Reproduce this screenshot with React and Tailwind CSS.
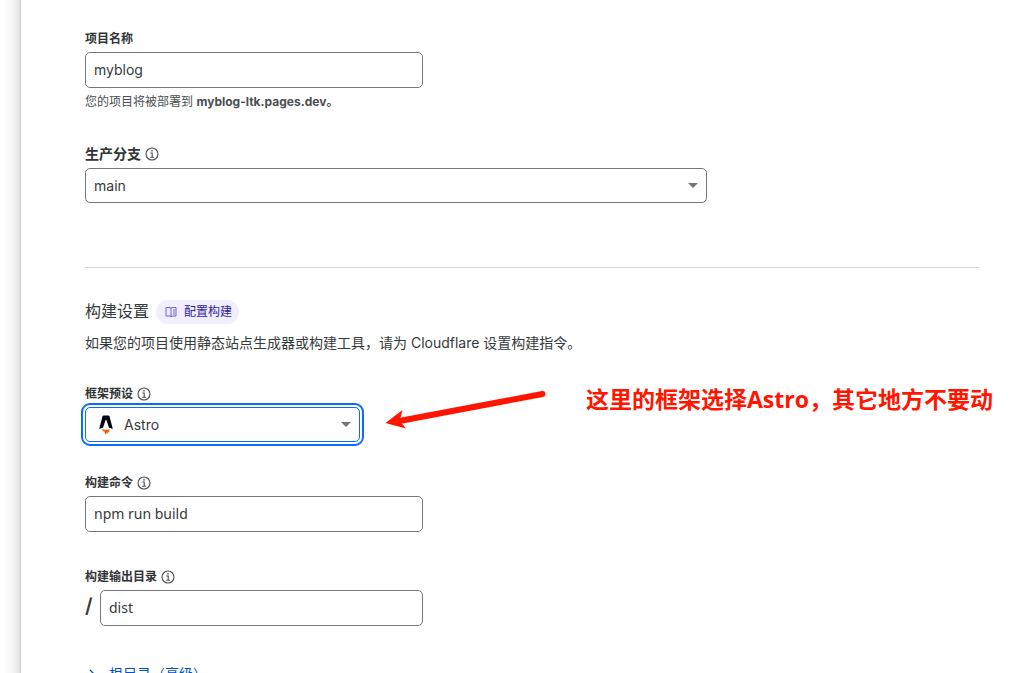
import { useState } from "react";

const fieldStyles =
  "w-full rounded-[5px] border border-[#76777b] bg-white px-2 text-sm text-[#36393a] outline-none";

function InfoIcon() {
  return (
    <svg viewBox="0 0 14 14" className="size-3.5 shrink-0" fill="none" stroke="#4a4d50" aria-hidden="true">
      <circle cx="7" cy="7" r="6" strokeWidth="1.1" />
      <path d="M5.4 6h1.8v4.2M5.2 10.2h3.8" strokeWidth="1.1" />
      <circle cx="7" cy="3.9" r="0.8" fill="#4a4d50" stroke="none" />
    </svg>
  );
}

function Caret() {
  return (
    <svg
      viewBox="0 0 10 5"
      className="pointer-events-none absolute right-[9px] top-[15px] h-[5px] w-2.5"
      aria-hidden="true"
    >
      <path d="M0 0h10L5 5z" fill="#72767a" />
    </svg>
  );
}

function AstroLogo() {
  return (
    <svg
      viewBox="0 0 14 20"
      className="pointer-events-none absolute left-3.5 top-2 h-5 w-3.5"
      aria-hidden="true"
    >
      <path
        fill="#000014"
        d="M3.500 1.200Q3.800.5 4.600.5h4.800q.8 0 1.100.7L13.800 14q-1.900-.9-3.800-1.200L7.500 5.200Q7 4.200 6.500 5.200L4 12.800Q2.100 13.100.2 14z"
      />
      <path
        fill="#ff5d01"
        d="M3.600 13.600c.6 1.200 2.100 1.300 3.600 1.200 1.200 0 2.300-.2 3.100-.9.6 2-.2 2.900-1.300 3.700-.6.4-.8.9-.6 1.500-.8-.4-1-1-.8-1.700-.5.500-.6 1.100-.5 2.100-1.100-.7-1.700-1.500-1.500-2.700-1.900-.6-2.600-1.700-2-3.200z"
      />
    </svg>
  );
}

function Label({ htmlFor, info, big, children }) {
  return (
    <div className={`flex items-center gap-1 ${big ? "mb-1.5 h-4" : "mb-1 h-[18px]"}`}>
      <label
        htmlFor={htmlFor}
        className={`font-bold text-[#313336] ${big ? "text-sm leading-4" : "text-xs leading-4"}`}
      >
        {children}
      </label>
      {info && <InfoIcon />}
    </div>
  );
}

// Flecha y texto en rojo sobre el formulario
function Nota() {
  return (
    <div className="pointer-events-none absolute left-[300px] top-0 flex items-start text-[#ff1500]">
      <svg width="162" height="48" viewBox="0 0 162 48" className="shrink-0" aria-hidden="true">
        <path d="M17 35.500 157.500 9" stroke="#ff1500" strokeWidth="6" strokeLinecap="round" />
        <path d="M.5 38 17.500 25 15.500 33 16.500 38 21 43.500z" fill="#ff1500" />
      </svg>
      <p className="ml-[39px] whitespace-nowrap text-[23px] leading-7 font-bold font-['Open_Sans','Noto_Sans_CJK_SC',sans-serif]">
        这里的框架选择Astro，其它地方不要动
      </p>
    </div>
  );
}

function App() {
  const [nombre, setNombre] = useState("myblog");
  const [rama, setRama] = useState("main");
  const [framework, setFramework] = useState("Astro");
  const [comando, setComando] = useState("npm run build");
  const [salida, setSalida] = useState("dist");

  return (
    <div className="flex min-h-screen bg-white text-[#36393a] font-[Inter,'Noto_Sans_CJK_SC',sans-serif]">
      <div className="w-[21px] shrink-0 border-r border-[#cdcdcd] bg-linear-to-r from-white from-20% via-[#f5f5f5] via-60% to-[#e4e4e4]" />

      <main className="min-w-0 flex-1 pl-16 pr-[54px] pt-[30px]">
        <form onSubmit={(e) => e.preventDefault()}>
          <div className="max-w-[338px]">
            <Label htmlFor="nombre">项目名称</Label>
            <input
              id="nombre"
              type="text"
              value={nombre}
              onChange={(e) => setNombre(e.target.value)}
              className={`block h-9 pb-0.5 ${fieldStyles}`}
            />
            <p className="mt-1.5 text-xs leading-4 text-[#4a4d50]">
              您的项目将被部署到 <strong>myblog-ltk.pages.dev。</strong>
            </p>
          </div>

          <div className="mt-9 max-w-[622px]">
            <Label htmlFor="rama" info big>生产分支</Label>
            <div className="relative">
              <select
                id="rama"
                value={rama}
                onChange={(e) => setRama(e.target.value)}
                className={`block h-[35px] appearance-none ${fieldStyles}`}
              >
                <option>main</option>
              </select>
              <Caret />
            </div>
          </div>

          <hr className="mt-16 border-[#d5d7d8]" />

          {/* Configuración de compilación */}
          <div className="mt-8 flex items-start gap-[7px]">
            <h2 className="text-base leading-[22px]">构建设置</h2>
            <a
              href="#build"
              className="flex h-6 items-center gap-[7px] rounded-full bg-[#f1effd] pl-[9px] pr-[7px] text-xs text-[#2d1ba0]"
            >
              <svg viewBox="0 0 12 12" className="size-3" fill="none" stroke="#6f61e0" aria-hidden="true">
                <path d="M1 1.500h4l1 .7 1-.7h4v8.500H7l-1 .7-1-.7H1zM6 2v8.500M8 4h2M8 6h2M8 8h2" />
              </svg>
              配置构建
            </a>
          </div>
          <p className="mt-[9px] text-sm leading-5">
            如果您的项目使用静态站点生成器或构建工具，请为 Cloudflare 设置构建指令。
          </p>

          <div className="relative mt-8">
            <Label htmlFor="framework" info>框架预设</Label>
            <div className="relative max-w-[275px]">
              <select
                id="framework"
                value={framework}
                onChange={(e) => setFramework(e.target.value)}
                className="block h-[35px] w-full appearance-none rounded-[5px] border border-[#0b6bff] bg-white pl-[38px] text-sm text-[#36393a] outline-2 outline-offset-2 outline-[#0b6bff]"
              >
                <option>Astro</option>
              </select>
              <AstroLogo />
              <Caret />
            </div>
            <Nota />
          </div>

          <div className="mt-8 max-w-[338px]">
            <Label htmlFor="comando" info>构建命令</Label>
            <input
              id="comando"
              type="text"
              value={comando}
              onChange={(e) => setComando(e.target.value)}
              className={`block h-9 pb-0.5 font-['Noto_Sans',sans-serif] ${fieldStyles}`}
            />
          </div>

          <div className="mt-9 max-w-[338px]">
            <Label htmlFor="salida" info>构建输出目录</Label>
            <div className="flex">
              <span className="w-[15px] shrink-0 text-xl leading-8 font-semibold">/</span>
              <input
                id="salida"
                type="text"
                value={salida}
                onChange={(e) => setSalida(e.target.value)}
                className={`block h-9 pb-0.5 font-['Noto_Sans',sans-serif] ${fieldStyles}`}
              />
            </div>
          </div>

          <button type="button" className="mt-[38px] flex items-center gap-2.5 text-sm leading-5 text-[#0051c3]">
            <svg viewBox="0 0 14 14" className="size-3.5" fill="none" stroke="#0051c3" strokeWidth="1.3" aria-hidden="true">
              <path d="M5 3l4.500 4.500L5 12" />
            </svg>
            根目录（高级）
          </button>
        </form>
      </main>
    </div>
  );
}

export default App;
